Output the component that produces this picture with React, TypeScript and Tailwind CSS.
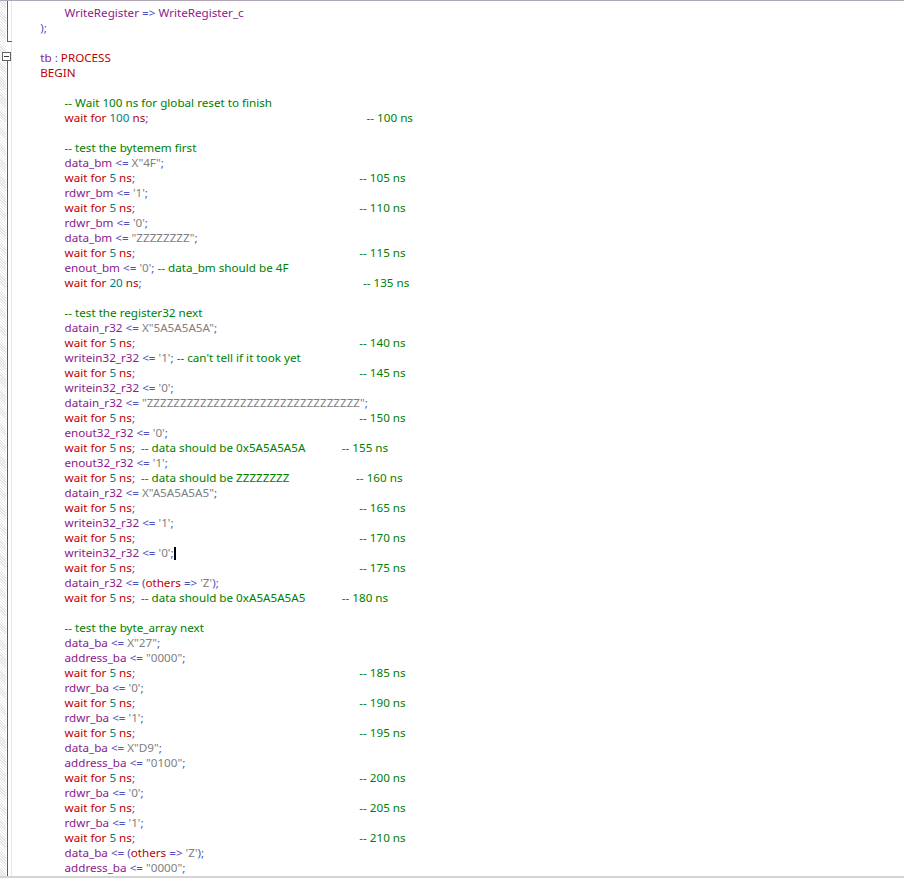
import React from "react";

type L = [number, string, string?, number?];
const W = "wait for 5 ns;";
const lines: L[] = [
  [16, "WriteRegister => WriteRegister_c"],
  [8, ");"],
  [0, ""],
  [8, "tb : PROCESS"],
  [8, "BEGIN"],
  [0, ""],
  [16, "-- Wait 100 ns for global reset to finish"],
  [16, "wait for 100 ns;", "-- 100 ns"],
  [0, ""],
  [16, "-- test the bytemem first"],
  [16, 'data_bm <= X"4F";'],
  [16, W, "-- 105 ns"],
  [16, "rdwr_bm <= '1';"],
  [16, W, "-- 110 ns"],
  [16, "rdwr_bm <= '0';"],
  [16, 'data_bm <= "ZZZZZZZZ";'],
  [16, W, "-- 115 ns"],
  [16, "enout_bm <= '0'; -- data_bm should be 4F"],
  [16, "wait for 20 ns;", "-- 135 ns"],
  [0, ""],
  [16, "-- test the register32 next"],
  [16, 'datain_r32 <= X"5A5A5A5A";'],
  [16, W, "-- 140 ns"],
  [16, "writein32_r32 <= '1'; -- can't tell if it took yet"],
  [16, W, "-- 145 ns"],
  [16, "writein32_r32 <= '0';"],
  [16, 'datain_r32 <= "ZZZZZZZZZZZZZZZZZZZZZZZZZZZZZZZZ";'],
  [16, W, "-- 150 ns"],
  [16, "enout32_r32 <= '0';"],
  [16, "wait for 5 ns;  -- data should be 0x5A5A5A5A", "-- 155 ns", 72],
  [16, "enout32_r32 <= '1';"],
  [16, "wait for 5 ns;  -- data should be ZZZZZZZZ", "-- 160 ns", 80],
  [16, 'datain_r32 <= X"A5A5A5A5";'],
  [16, W, "-- 165 ns"],
  [16, "writein32_r32 <= '1';"],
  [16, W, "-- 170 ns"],
  [16, "writein32_r32 <= '0';"],
  [16, W, "-- 175 ns"],
  [16, "datain_r32 <= (others => 'Z');"],
  [16, "wait for 5 ns;  -- data should be 0xA5A5A5A5", "-- 180 ns", 72],
  [0, ""],
  [16, "-- test the byte_array next"],
  [16, 'data_ba <= X"27";'],
  [16, 'address_ba <= "0000";'],
  [16, W, "-- 185 ns"],
  [16, "rdwr_ba <= '0';"],
  [16, W, "-- 190 ns"],
  [16, "rdwr_ba <= '1';"],
  [16, W, "-- 195 ns"],
  [16, 'data_ba <= X"D9";'],
  [16, 'address_ba <= "0100";'],
  [16, W, "-- 200 ns"],
  [16, "rdwr_ba <= '0';"],
  [16, W, "-- 205 ns"],
  [16, "rdwr_ba <= '1';"],
  [16, W, "-- 210 ns"],
  [16, "data_ba <= (others => 'Z');"],
  [16, 'address_ba <= "0000";'],
];

const KW = new Set(["wait", "for", "ns", "others", "PROCESS", "BEGIN"]);

function tokenize(s: string) {
  const out: React.ReactNode[] = [];
  let i = 0;
  let k = 0;
  while (i < s.length) {
    const r = s.slice(i);
    let m: RegExpMatchArray | null;
    if (r.startsWith("--")) {
      out.push(<span key={k++} className="text-[#008000]">{r}</span>);
      break;
    } else if ((m = r.match(/^X?"[^"]*"|^'[^']'/))) {
      out.push(<span key={k++} className="text-[#808080]">{m[0]}</span>);
      i += m[0].length;
    } else if ((m = r.match(/^[A-Za-z_][A-Za-z0-9_]*/))) {
      out.push(
        <span key={k++} className={KW.has(m[0]) ? "text-[#c00000]" : "text-[#8b1a8b]"}>{m[0]}</span>
      );
      i += m[0].length;
    } else if ((m = r.match(/^[0-9]+/))) {
      out.push(<span key={k++} className="text-[#008080]">{m[0]}</span>);
      i += m[0].length;
    } else if ((m = r.match(/^ +/))) {
      out.push(m[0]);
      i += m[0].length;
    } else {
      out.push(<span key={k++} className="text-[#5050c0]">{r[0]}</span>);
      i += 1;
    }
  }
  return out;
}

export default function App() {
  return (
    <div className="w-[904px] h-[878px] bg-white overflow-hidden border-t border-[#b0a8b8] border-b-2 border-b-[#d4d4d4] flex">
      <div className="w-[12px] shrink-0 flex border-r border-[#e8e8e8]">
        <div className="w-[6px] bg-[repeating-linear-gradient(45deg,#e4e4e4_0px,#e4e4e4_1px,#ffffff_1px,#ffffff_2px)]" />
        <div className="flex-1 relative">
          <div className="absolute left-px top-0 h-[40px] w-px bg-[#606060]" />
          <div className="absolute left-px top-[40px] h-px w-[5px] bg-[#606060]" />
          <div className="absolute left-[-4px] top-[51px] w-[9px] h-[9px] border border-[#606060] bg-white flex items-center justify-center">
            <div className="w-[5px] h-px bg-[#404040]" />
          </div>
          <div className="absolute left-px top-[60px] bottom-0 w-px bg-[#606060]" />
        </div>
      </div>
      <div className="flex-1 pl-[4px] pt-[4px] font-['Liberation_Mono'] text-[11.67px] leading-[15px] whitespace-pre">
        {lines.map(([ind, t, c, col], idx) => {
          let s = " ".repeat(ind) + t;
          if (c) s = s.padEnd(col ?? 104, " ") + c;
          return (
            <div key={idx} className="h-[15px]">
              {tokenize(s)}
              {idx === 36 && <span className="inline-block w-[2px] h-[13px] bg-black align-middle" />}
            </div>
          );
        })}
      </div>
    </div>
  );
}
